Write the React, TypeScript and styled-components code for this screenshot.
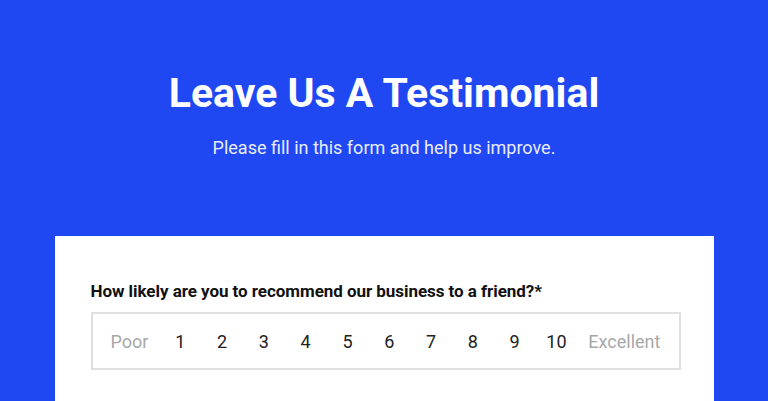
import styled, { createGlobalStyle } from 'styled-components';

const GlobalStyle = createGlobalStyle`
  html, body {
    margin: 0;
    padding: 0;
    background: #2048f2;
    font-family: Roboto, 'Liberation Sans', sans-serif;
  }
`;

const Page = styled.main`
  height: 401px;
  overflow: hidden;
  background: #2048f2;
  display: flex;
  flex-direction: column;
  align-items: center;
`;

const Header = styled.header`
  padding-top: 69px;
  text-align: center;
  color: #fff;

  h1 {
    margin: 0;
    font-size: 41px;
    line-height: 48px;
    font-weight: 700;
  }

  p {
    margin: 20px 0 0;
    font-size: 18px;
    line-height: 22px;
    color: #e8ecff;
  }
`;

const Card = styled.section`
  margin-top: 77px;
  width: 659px;
  flex: 1;
  background: #fff;
  padding: 45px 33px 0 36px;
  box-sizing: border-box;
`;

const Question = styled.label`
  display: block;
  font-size: 17px;
  line-height: 20px;
  font-weight: 700;
  color: #111;
  letter-spacing: -0.05px;
`;

const Scale = styled.div`
  margin-top: 11px;
  height: 58px;
  box-sizing: border-box;
  border: 2px solid #e0e0e0;
  display: flex;
  align-items: center;
  padding: 0 18px;
`;

const Edge = styled.span`
  font-size: 18px;
  color: #a8a8a8;
`;

const Option = styled.button`
  width: 41.8px;
  flex: none;
  padding: 0;
  border: none;
  background: none;
  font-family: inherit;
  font-size: 18px;
  color: #222;
  text-align: center;
  cursor: pointer;
`;

const Spacer = styled.span<{ $w: number }>`
  width: ${(p) => p.$w}px;
  flex: none;
`;

const App = () => {
  const options = Array.from({ length: 10 }, (_, i) => i + 1);
  return (
    <>
      <GlobalStyle />
      <Page>
        <Header>
          <h1>Leave Us A Testimonial</h1>
          <p>Please fill in this form and help us improve.</p>
        </Header>
        <Card>
          <Question>How likely are you to recommend our business to a friend?*</Question>
          <Scale>
            <Edge>Poor</Edge>
            <Spacer $w={11} />
            {options.map((n) => (
              <Option key={n}>{n}</Option>
            ))}
            <Spacer $w={11} />
            <Edge>Excellent</Edge>
          </Scale>
        </Card>
      </Page>
    </>
  );
};

export default App;
